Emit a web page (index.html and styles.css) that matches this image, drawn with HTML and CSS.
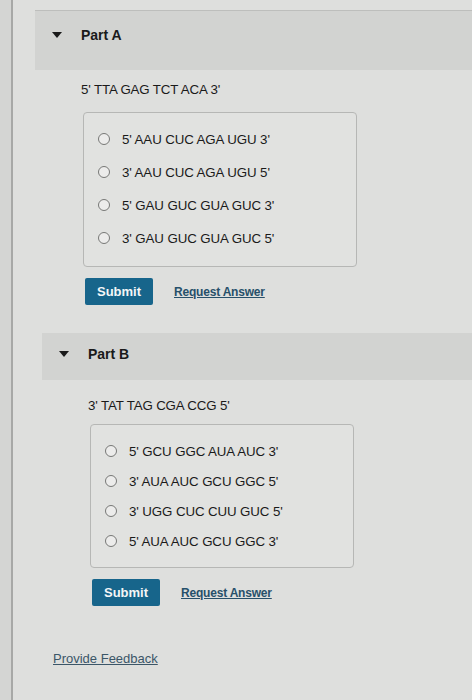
FILE: index.html
```html
<!DOCTYPE html>
<html lang="en">
<head>
<meta charset="utf-8">
<title>Parts</title>
<link rel="stylesheet" href="styles.css">
</head>
<body>
<div class="page">
  <section class="part part-a">
    <div class="part-head">
      <span class="caret"></span>
      <span class="part-title">Part A</span>
    </div>
    <div class="part-body">
      <p class="question">5' TTA GAG TCT ACA 3'</p>
      <div class="choices">
        <label class="choice"><span class="radio"></span><span>5' AAU CUC AGA UGU 3'</span></label>
        <label class="choice"><span class="radio"></span><span>3' AAU CUC AGA UGU 5'</span></label>
        <label class="choice"><span class="radio"></span><span>5' GAU GUC GUA GUC 3'</span></label>
        <label class="choice"><span class="radio"></span><span>3' GAU GUC GUA GUC 5'</span></label>
      </div>
      <div class="actions">
        <button class="submit">Submit</button>
        <a class="request" href="#">Request Answer</a>
      </div>
    </div>
  </section>
  <section class="part part-b">
    <div class="part-head">
      <span class="caret"></span>
      <span class="part-title">Part B</span>
    </div>
    <div class="part-body">
      <p class="question">3' TAT TAG CGA CCG 5'</p>
      <div class="choices">
        <label class="choice"><span class="radio"></span><span>5' GCU GGC AUA AUC 3'</span></label>
        <label class="choice"><span class="radio"></span><span>3' AUA AUC GCU GGC 5'</span></label>
        <label class="choice"><span class="radio"></span><span>3' UGG CUC CUU GUC 5'</span></label>
        <label class="choice"><span class="radio"></span><span>5' AUA AUC GCU GGC 3'</span></label>
      </div>
      <div class="actions">
        <button class="submit">Submit</button>
        <a class="request" href="#">Request Answer</a>
      </div>
    </div>
  </section>
  <div class="feedback"><a href="#">Provide Feedback</a></div>
</div>
</body>
</html>
```

FILE: styles.css
```css
* { box-sizing: border-box; }
html, body { margin: 0; padding: 0; }
body {
  background: #d4d5d3;
  font-family: "Liberation Sans", Arial, sans-serif;
  color: #1a1a1a;
}
.page {
  margin-left: 11px;
  min-height: 700px;
  border-left: 2px solid #a7a8a6;
  background: #dedfdd;
  padding-top: 10px;
}
.part { margin-left: 22px; }
.part-head {
  display: flex;
  align-items: center;
  height: 60px;
  padding: 16px 0 0 17px;
  align-items: flex-start;
  background: #d2d3d1;
  border-top: 1px solid #bdbebc;
}
.caret {
  width: 0;
  height: 0;
  margin-top: 5px;
  border-left: 5px solid transparent;
  border-right: 5px solid transparent;
  border-top: 6px solid #1a1a1a;
  margin-right: 19px;
}
.part-title {
  font-weight: bold;
  font-size: 14px;
  line-height: 16px;
}
.part-body {
  padding-left: 46px;
  padding-top: 12px;
}
.question {
  margin: 0;
  font-size: 13.3px;
  line-height: 16px;
  letter-spacing: -0.15px;
}
.choices {
  margin: 14px 0 0 2px;
  width: 274px;
  border: 1px solid #b6b7b5;
  border-radius: 4px;
  background: #e1e2e0;
  padding: 17px 0 19px 14px;
  display: flex;
  flex-direction: column;
  gap: 15px;
}
.choice {
  display: flex;
  align-items: center;
  height: 18px;
  font-size: 13.3px;
  letter-spacing: -0.1px;
  gap: 12px;
}
.radio {
  width: 12px;
  height: 12px;
  border: 1.6px solid #777876;
  border-radius: 50%;
  background: #ececeb;
  flex: none;
}
.actions {
  display: flex;
  align-items: center;
  gap: 21px;
  margin: 11px 0 0 4px;
}
.submit {
  width: 68px;
  height: 27px;
  border: none;
  border-radius: 2px;
  background: #17658b;
  color: #f4f6f7;
  font-family: "Liberation Sans", Arial, sans-serif;
  font-weight: bold;
  font-size: 13px;
  padding: 0;
}
.request {
  color: #27506a;
  font-weight: bold;
  font-size: 12px;
  letter-spacing: -0.2px;
  text-decoration: underline;
}
.part-b {
  margin-left: 29px;
  margin-top: 28px;
}
.part-b .part-head {
  height: 47px;
  padding-top: 13px;
  border-top: none;
}
.part-b .part-body { padding-top: 18px; }
.part-b .choices {
  margin-top: 10px;
  width: 264px;
  gap: 12px;
  padding-bottom: 17px;
}
.feedback {
  padding-left: 40px;
  margin-top: 45px;
  font-size: 13px;
}
.feedback a {
  color: #3b5668;
  text-decoration: underline;
}
```
